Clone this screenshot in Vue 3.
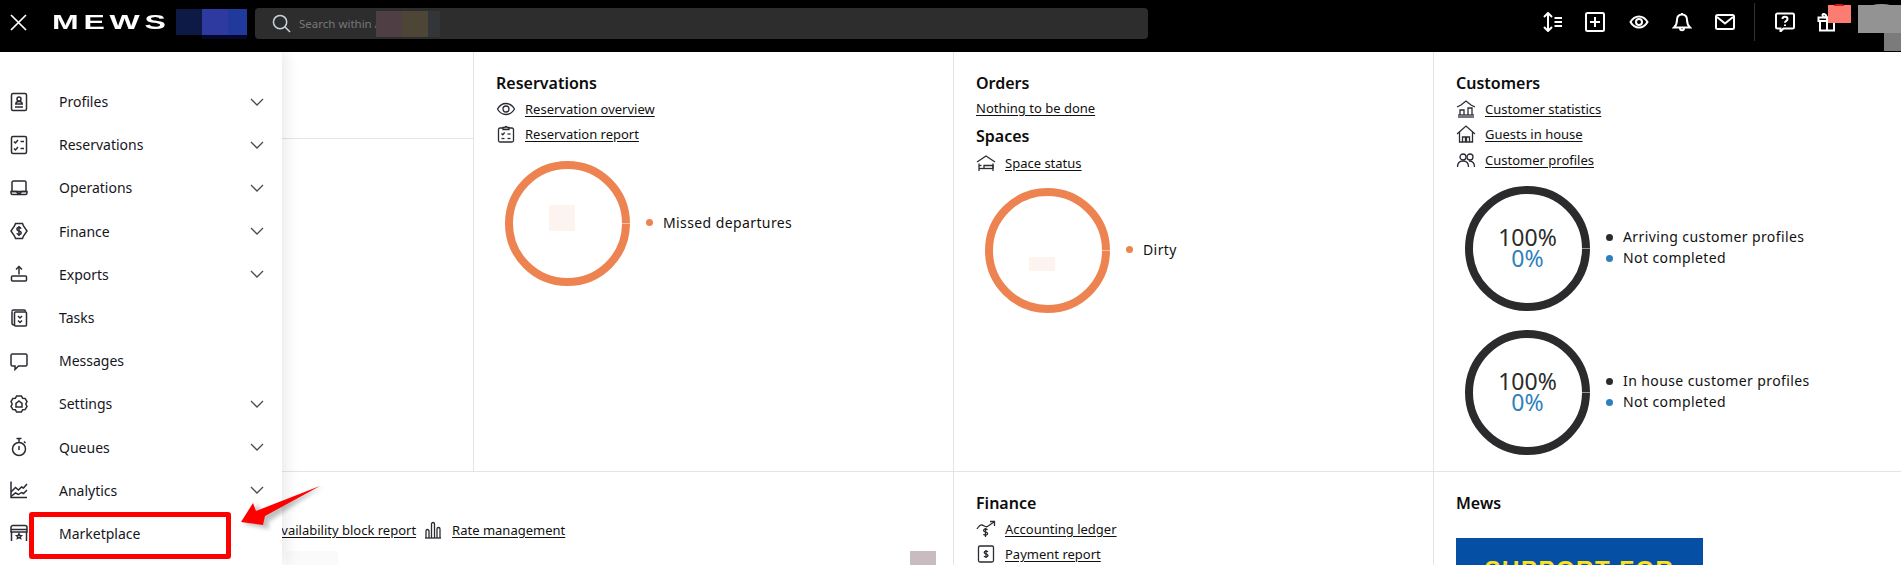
<template>
  <div class="page">
    <header class="topbar">
      <svg class="close" viewBox="0 0 17 17"><path d="M1 1l15 15M16 1L1 16" /></svg>
      <span class="logo"><span class="logo-text">MEWS</span></span>
      <div class="blur-logo"><i></i><i></i><i></i></div>
      <div class="search">
        <svg class="search-icon" viewBox="0 0 20 20"><circle cx="8.5" cy="8.5" r="7" /><path d="M13.5 13.5l5.5 5.5" /></svg>
        <span>Search within A</span>
        <div class="blur-search"><i></i><i></i><i></i></div>
      </div>
      <div class="actions">
        <svg v-for="n in ['sort', 'plus', 'eye', 'bell', 'mail']" :key="n" class="top-icon" viewBox="0 0 20 20">
          <path v-for="d in icons[n]" :key="d" :d="d" />
        </svg>
        <span class="divider"></span>
        <svg class="top-icon" viewBox="0 0 20 20"><path v-for="d in icons.help" :key="d" :d="d" /></svg>
        <div class="gift">
          <svg class="top-icon" viewBox="0 0 20 20"><path v-for="d in icons.gift" :key="d" :d="d" /></svg>
          <span class="gift-badge"></span>
        </div>
        <div class="avatar"><i></i></div>
      </div>
    </header>

    <main class="board">
      <section class="col-left">
        <div class="left-top"></div>
      </section>

      <section class="cell">
        <h3>Reservations</h3>
        <a v-for="l in reservationLinks" :key="l.text" class="link">
          <svg viewBox="0 0 20 20"><path v-for="d in icons[l.icon]" :key="d" :d="d" /></svg>{{ l.text }}
        </a>
        <div class="chart chart-first">
          <div class="donut">
            <svg viewBox="0 0 125 125"><circle cx="62.5" cy="62.5" r="58.5" :stroke="orange" stroke-dasharray="366.4 1.2" stroke-dashoffset="-0.6" /></svg>
            <span class="patch patch-res"></span>
          </div>
          <ul class="legend">
            <li><i :style="{ background: orange }"></i>Missed departures</li>
          </ul>
        </div>
      </section>

      <section class="cell">
        <h3>Orders</h3>
        <a class="link plain">Nothing to be done</a>
        <h3 class="second">Spaces</h3>
        <a class="link">
          <svg viewBox="0 0 20 20"><path v-for="d in icons.bedroom" :key="d" :d="d" /></svg>Space status
        </a>
        <div class="chart">
          <div class="donut">
            <svg viewBox="0 0 125 125"><circle cx="62.5" cy="62.5" r="58.5" :stroke="orange" stroke-dasharray="366.4 1.2" stroke-dashoffset="-0.6" /></svg>
            <span class="patch patch-space"></span>
          </div>
          <ul class="legend">
            <li><i :style="{ background: orange }"></i>Dirty</li>
          </ul>
        </div>
      </section>

      <section class="cell">
        <h3>Customers</h3>
        <a v-for="l in customerLinks" :key="l.text" class="link">
          <svg viewBox="0 0 20 20"><path v-for="d in icons[l.icon]" :key="d" :d="d" /></svg>{{ l.text }}
        </a>
        <div v-for="c in customerCharts" :key="c" class="chart customer">
          <div class="donut">
            <svg viewBox="0 0 125 125"><circle cx="62.5" cy="62.5" r="58.5" stroke="#2b2b2d" stroke-dasharray="366.4 1.2" stroke-dashoffset="-0.6" /></svg>
            <div class="percent"><b>100%</b><b class="blue">0%</b></div>
          </div>
          <ul class="legend">
            <li><i class="dark"></i>{{ c }}</li>
            <li><i class="bluedot"></i>Not completed</li>
          </ul>
        </div>
      </section>

      <section class="cell bottom-left">
        <div class="rate-links">
          <a class="link plain">Availability block report</a>
          <a class="link">
            <svg viewBox="0 0 20 20"><path v-for="d in icons.bars" :key="d" :d="d" /></svg>Rate management
          </a>
        </div>
        <span class="patch patch-faint"></span>
        <span class="patch patch-grey"></span>
      </section>

      <section class="cell bottom">
        <h3>Finance</h3>
        <a v-for="l in financeLinks" :key="l.text" class="link">
          <svg viewBox="0 0 20 20"><path v-for="d in icons[l.icon]" :key="d" :d="d" /></svg>{{ l.text }}
        </a>
      </section>

      <section class="cell bottom">
        <h3>Mews</h3>
        <div class="banner">SUPPORT FOR</div>
      </section>
    </main>

    <nav class="sidebar">
      <a v-for="item in nav" :key="item.label" class="nav-row">
        <svg class="nav-icon" viewBox="0 0 20 20"><path v-for="d in icons[item.icon]" :key="d" :d="d" /></svg>
        <span class="nav-label">{{ item.label }}</span>
        <svg v-if="item.sub" class="chevron" viewBox="0 0 14 8"><path d="M1 1l6 6 6-6" /></svg>
      </a>
    </nav>

    <!-- annotation drawn on top of the screenshot -->
    <div class="callout"></div>
    <svg class="arrow" viewBox="0 0 100 60">
      <path class="arrow-shadow" d="M4 38L18 18l3 9L83 0 28 36l1 7z" />
      <path class="arrow-fill" d="M1 36L13 17l3 8L80 0 25 30l-2 9z" />
    </svg>
  </div>
</template>

<script setup>
const orange = '#ed8351'

const nav = [
  { label: 'Profiles', icon: 'profile', sub: true },
  { label: 'Reservations', icon: 'checklist', sub: true },
  { label: 'Operations', icon: 'laptop', sub: true },
  { label: 'Finance', icon: 'money', sub: true },
  { label: 'Exports', icon: 'upload', sub: true },
  { label: 'Tasks', icon: 'tasks' },
  { label: 'Messages', icon: 'message' },
  { label: 'Settings', icon: 'gear', sub: true },
  { label: 'Queues', icon: 'timer', sub: true },
  { label: 'Analytics', icon: 'chart', sub: true },
  { label: 'Marketplace', icon: 'store' },
]

const reservationLinks = [
  { text: 'Reservation overview', icon: 'eye' },
  { text: 'Reservation report', icon: 'clipboard' },
]
const customerLinks = [
  { text: 'Customer statistics', icon: 'stats' },
  { text: 'Guests in house', icon: 'house' },
  { text: 'Customer profiles', icon: 'people' },
]
const financeLinks = [
  { text: 'Accounting ledger', icon: 'ledger' },
  { text: 'Payment report', icon: 'payment' },
]
const customerCharts = ['Arriving customer profiles', 'In house customer profiles']

const icons = {
  profile: ['M4 1.5h12A1.5 1.5 0 0 1 17.5 3v14a1.5 1.5 0 0 1-1.5 1.5H4A1.5 1.5 0 0 1 2.5 17V3A1.5 1.5 0 0 1 4 1.5z', 'M10 5a2 2 0 1 1 0 4 2 2 0 0 1 0-4z', 'M6.8 12a3.2 2.6 0 0 1 6.4 0z', 'M6 15h8'],
  checklist: ['M4 1.500h12A1.5 1.5 0 0 1 17.5 3v14a1.5 1.5 0 0 1-1.5 1.5H4A1.5 1.5 0 0 1 2.5 17V3A1.5 1.5 0 0 1 4 1.500z', 'M5 6.500l1.5 1.5 2.500-3', 'M11.500 6.500h3.500', 'M5 13.500l1.5 1.5 2.500-3', 'M11.500 13.500h3.500'],
  laptop: ['M4.5 3h11A1.5 1.5 0 0 1 17 4.5v9H3v-9A1.5 1.5 0 0 1 4.5 3z', 'M2 13.500h5.5l1 1.500h3l1-1.500H18V15a1.5 1.5 0 0 1-1.5 1.5h-13A1.5 1.5 0 0 1 2 15z'],
  money: ['M6.500 2.500h7l1 2.500L18 10l-3.500 5-1 2.500h-7l-1-2.500L2 10l3.500-5z', 'M12.200 7.600c-.5-.7-1.200-1-2.200-1-1.200 0-2.100.6-2.100 1.700 0 2.400 4.300 1.100 4.300 3.500 0 1.100-.9 1.700-2.200 1.700-1 0-1.800-.4-2.300-1.100', 'M10 5v10'],
  upload: ['M10 10.500V2.500', 'M7 5.500l3-3 3 3', 'M3.500 12h13a1 1 0 0 1 1 1v3a1 1 0 0 1-1 1h-13a1 1 0 0 1-1-1v-3a1 1 0 0 1 1-1z'],
  tasks: ['M6.500 4h10A1 1 0 0 1 17.500 5v12a1 1 0 0 1-1 1h-10a1 1 0 0 1-1-1V5a1 1 0 0 1 1-1z', 'M3 3.500V15a2 2 0 0 0 2 2', 'M3 3.500A1.500 1.500 0 0 1 4.500 2H15a1.500 1.500 0 0 1 1.500 1.500', 'M9 8l2 2 2-2', 'M9 12.500l2 2 2-2'],
  message: ['M3.500 3h13A1.500 1.500 0 0 1 18 4.500v9a1.500 1.500 0 0 1-1.500 1.500H9.500L6 18.500V15H3.500A1.500 1.500 0 0 1 2 13.500v-9A1.500 1.500 0 0 1 3.500 3z'],
  gear: ['M7.600 2h4.800l1.200 2.200 2.500.2 1.900 3.100L16.800 10l1.200 2.500-1.900 3.100-2.500.2L12.400 18H7.600l-1.200-2.200-2.500-.2L2 12.500 3.200 10 2 7.500l1.900-3.100 2.500-.2z', 'M10 7l3 2.300V13H7V9.300z'],
  timer: ['M10 5.500a6.500 6.500 0 1 1 0 13 6.500 6.500 0 0 1 0-13z', 'M7.500 1.500h5', 'M10 1.500v4', 'M10 9v4', 'M15 4.500l1.500 1.500'],
  chart: ['M2 1.500v16h16', 'M2 12l4.500-4.500 3 2.500 3-3 2 1L18 4', 'M2 16.500l4.500-3.500 3 1.500 3-2 2 1L18 10'],
  store: ['M4 2.500h12a2 2 0 0 1 2 2V9H2V4.500a2 2 0 0 1 2-2z', 'M2 6.500h16', 'M2.500 9v9', 'M17.500 9v9', 'M10 10.800l.8 1.600 1.700.2-1.200 1.200.3 1.700-1.600-.8-1.600.8.3-1.700-1.200-1.200 1.700-.2z'],
  eye: ['M1.500 10C3.500 6.500 6.500 4.500 10 4.500s6.500 2 8.500 5.500c-2 3.500-5 5.500-8.500 5.500S3.500 13.500 1.500 10z', 'M10 7a3 3 0 1 1 0 6 3 3 0 0 1 0-6z'],
  clipboard: ['M7 4H4a1.500 1.500 0 0 0-1.500 1.500v11A1.500 1.500 0 0 0 4 18h12a1.500 1.500 0 0 0 1.500-1.500v-11A1.500 1.500 0 0 0 16 4h-3', 'M7 5.500V3.500h2a1 1 0 0 1 2 0h2v2z', 'M5.500 9.500l1.200 1.200 2-2.200', 'M11.500 10h3', 'M5.500 14.500h3', 'M11.500 14.500h3'],
  bedroom: ['M1 9l9-6 9 6', 'M3 18v-7.500', 'M17 18v-7.500', 'M3 15.500h14', 'M3 12.500h2.500', 'M8 15.500v-3h9v3'],
  stats: ['M1 8l4-2 5-4 5 4 4 2', 'M2 18h16', 'M4 16V11h4v5', 'M12 16V9h4v7', 'M2 16h16'],
  house: ['M1 10l9-8 9 8', 'M3.500 8v10h13V8', 'M6.500 18v-5h3v5', 'M10.500 18v-5h3v5'],
  people: ['M7 4a3 3 0 1 1 0 6 3 3 0 0 1 0-6z', 'M14 4a3 3 0 1 1 0 6 3 3 0 0 1 0-6z', 'M1.500 17c0-4 2.500-6 5.500-6s5.500 2 5.500 6', 'M13 11c3 0 5.500 2 5.500 6'],
  ledger: ['M1 10c2-3 3-4.500 5-4 2.500.6 3 2.500 5.500 1.500L18 3', 'M14 2.500h4.500V7', 'M11.500 11c-.4-.6-1-1-2-1-1.200 0-1.900.6-1.900 1.400 0 2 4 1 4 3.200 0 1-.9 1.500-2.100 1.500-1 0-1.700-.4-2-1', 'M9.500 9v9'],
  payment: ['M4 2h12a1.500 1.500 0 0 1 1.500 1.500v13A1.500 1.500 0 0 1 16 18H4a1.500 1.500 0 0 1-1.500-1.500v-13A1.500 1.500 0 0 1 4 2z', 'M12 8c-.4-.6-1-.9-2-.9-1.100 0-1.800.5-1.800 1.300 0 1.900 3.800 1 3.800 3.100 0 .9-.8 1.400-2 1.400-1 0-1.700-.4-2-.9', 'M10 6v8'],
  bars: ['M2 18h16', 'M3 18v-7a1.500 1.500 0 0 1 3 0v7', 'M8.500 18V4a1.500 1.500 0 0 1 3 0v14', 'M14 18V9a1.500 1.500 0 0 1 3 0v9'],
  sort: ['M6 1v18', 'M2 5l4-4 4 4', 'M2 15l4 4 4-4', 'M12.500 6H20', 'M12.500 10H20', 'M12.500 14H20'],
  plus: ['M2.500 1h15A1.500 1.500 0 0 1 19 2.500v15a1.500 1.500 0 0 1-1.500 1.500h-15A1.500 1.500 0 0 1 1 17.500v-15A1.500 1.500 0 0 1 2.500 1z', 'M10 5v10', 'M5 10h10'],
  bell: ['M10 2.500c-3.500 0-5 2.500-5 5.500 0 4-1 5.500-3 7.500h16c-2-2-3-3.500-3-7.500 0-3-1.500-5.500-5-5.500z', 'M8 16c0 3 4 3 4 0', 'M10 1v1.500'],
  mail: ['M2.500 3h15A1.500 1.500 0 0 1 19 4.500v11a1.500 1.500 0 0 1-1.500 1.500h-15A1.500 1.500 0 0 1 1 15.500v-11A1.500 1.500 0 0 1 2.500 3z', 'M2 5l8 6.500L18 5'],
  help: ['M2.500 1.500h15A1.500 1.500 0 0 1 19 3v12a1.500 1.500 0 0 1-1.500 1.500h-9l-3 3v-3h-3A1.500 1.500 0 0 1 1 15V3a1.500 1.500 0 0 1 1.500-1.500z', 'M7.500 7c0-3 5-3 5 0 0 2-2.500 1.700-2.500 3.800', 'M10 12.500v1.500'],
  gift: ['M3 9h14v9.500H3z', 'M1.500 5.500h17V9h-17z', 'M10 5.500v13', 'M10 5.500C7 5.500 5.500 4.500 5.500 3s3-2 4.500 2.500z'],
}
</script>

<style>
html, body { margin: 0; background: #fff; overflow: hidden; }
</style>

<style scoped>
.page {
  position: relative;
  width: 1901px;
  height: 565px;
  overflow: hidden;
  font-family: "Noto Sans", "Open Sans", sans-serif;
  color: #111;
  background: #fff;
}

/* top bar */
.topbar {
  display: flex;
  align-items: flex-start;
  height: 52px;
  padding-left: 10px;
  box-sizing: border-box;
  background: #000;
}
.close {
  width: 17px;
  height: 17px;
  margin: 14px 25px 0 0;
  fill: none;
  stroke: #fff;
  stroke-width: 1.7;
}
.logo {
  display: block;
  width: 114px;
  height: 52px;
  margin-right: 10px;
}
.logo-text {
  display: inline-block;
  font: 700 20px/44px "Liberation Sans", sans-serif;
  letter-spacing: 3px;
  color: #fff;
  transform: scaleX(1.6);
  transform-origin: left center;
}
.blur-logo {
  display: flex;
  margin: 9px 8px 0 0;
}
.blur-logo i { display: block; width: 26px; height: 26px; background: #0c1a45; }
.blur-logo i:nth-child(2) { background: #2e3a9f; box-shadow: 0 4px 0 #06062a; }
.blur-logo i:nth-child(3) { width: 19px; background: #1f3a9c; box-shadow: 0 4px 0 #06062a; }
.search {
  position: relative;
  display: flex;
  align-items: center;
  gap: 8px;
  width: 893px;
  height: 31px;
  margin-top: 8px;
  padding-left: 17px;
  box-sizing: border-box;
  border-radius: 4px;
  background: #2d2d2d;
  font-size: 11.5px;
  color: #787878;
}
.search-icon {
  width: 19px;
  height: 19px;
  fill: none;
  stroke: #c9d3dc;
  stroke-width: 1.6;
}
.blur-search {
  position: absolute;
  left: 121px;
  top: 3px;
  display: flex;
}
.blur-search i { display: block; width: 26px; height: 26px; background: #4f3f44; }
.blur-search i:nth-child(2) { background: #4d4536; }
.blur-search i:nth-child(3) { width: 12px; background: #333638; }
.actions {
  display: flex;
  align-items: flex-start;
  gap: 23.25px;
  margin-left: auto;
}
.top-icon {
  display: block;
  width: 20px;
  height: 20px;
  margin-top: 12px;
  fill: none;
  stroke: #fff;
  stroke-width: 2;
}
.divider {
  width: 1px;
  height: 38px;
  margin: 3px -4px 0;
  background: #333;
}
.gift {
  position: relative;
  margin-left: -1px;
}
.gift-badge {
  position: absolute;
  left: 11px;
  top: 5px;
  width: 23px;
  height: 18px;
  background: #fd7c72;
}
.gift-badge::before {
  content: "";
  position: absolute;
  left: 6px;
  top: -1px;
  width: 10px;
  height: 2px;
  border-radius: 2px 2px 0 0;
  background: #d01818;
}
.avatar {
  position: relative;
  width: 43px;
  height: 28px;
  margin: 5px 0 0 -2px;
  background: #939393;
}
.avatar::before {
  content: "";
  position: absolute;
  left: 10px;
  top: -1px;
  width: 27px;
  height: 8px;
  border-radius: 50%;
  background: #939393;
}
.avatar i {
  position: absolute;
  right: 0;
  top: 28px;
  width: 17px;
  height: 18px;
  background: #7b7b7b;
}

/* dashboard grid */
.board {
  display: grid;
  grid-template-columns: 473px 480px 480px 468px;
  grid-template-rows: 420px 93px;
}
.cell {
  position: relative;
  padding: 20px 16px 0 22px;
  border-left: 1px solid #e4e4e4;
  box-sizing: border-box;
  border-bottom: 1px solid #e4e4e4;
  overflow: hidden;
}
.col-left { border-bottom: 1px solid #e4e4e4; }
.left-top {
  height: 86px;
  border-bottom: 1px solid #e4e4e4;
}
.cell h3 {
  margin: 0 0 2px;
  font-size: 16px;
  font-weight: 600;
  line-height: 22px;
  color: #0c0c0c;
}
.cell h3.second { margin: 5px 0 3px; }
.link {
  display: flex;
  align-items: center;
  gap: 9px;
  height: 25.5px;
  width: max-content;
  font-size: 13px;
  text-decoration: underline;
  text-underline-offset: 2px;
  color: #111;
}
.link.plain { height: 24px; }
.link svg {
  flex: none;
  width: 20px;
  height: 20px;
  fill: none;
  stroke: #2b2b33;
  stroke-width: 1.3;
}
.chart {
  display: flex;
  align-items: center;
  gap: 16px;
  margin: 12px 0 0 9px;
}
.chart-first { margin-top: 13.5px; }
.chart.customer { margin-top: 13px; }
.chart.customer + .chart.customer { margin-top: 19px; }
.donut {
  position: relative;
  flex: none;
  width: 125px;
  height: 125px;
}
.donut svg {
  display: block;
  width: 125px;
  height: 125px;
  fill: none;
}
.donut circle { stroke-width: 8; }
.percent {
  position: absolute;
  inset: 0 0 1px;
  display: flex;
  flex-direction: column;
  align-items: center;
  justify-content: center;
  font-size: 23px;
  line-height: 21px;
  color: #2b2b2d;
}
.percent b { font-weight: 400; }
.percent .blue { color: #2e7fbd; }
.legend {
  margin: -2px 0 0;
  padding: 0;
  list-style: none;
  font-size: 14px;
  line-height: 21px;
  letter-spacing: .4px;
}
.legend li {
  display: flex;
  align-items: center;
  gap: 10px;
}
.legend i {
  display: block;
  width: 7px;
  height: 7px;
  margin-top: 1px;
  border-radius: 50%;
}
.legend i.dark { background: #2b2b2d; }
.legend i.bluedot { background: #2e7fbd; }
.patch {
  position: absolute;
  display: block;
}
.patch-res { left: 44px; top: 44px; width: 26px; height: 26px; background: #fdf4ef; }
.patch-space { left: 44px; top: 69px; width: 26px; height: 14px; background: #fdf4ef; }
.patch-faint { left: 286px; top: 79px; width: 52px; height: 14px; background: #fafafa; }
.patch-grey { left: 910px; top: 79px; width: 26px; height: 14px; background: #c9bcc0; }

.bottom-left {
  grid-column: 1 / span 2;
  padding-top: 45px;
  border-left: 0;
  border-bottom: 0;
}
.rate-links {
  display: flex;
  align-items: center;
  gap: 7px;
  padding-left: 251px;
}
.bottom { border-bottom: 0; }
.banner {
  width: 247px;
  height: 120px;
  margin-top: 24px;
  padding-top: 19px;
  box-sizing: border-box;
  background: #0550a5;
  color: #ffe11a;
  font: 700 24px/26px "Liberation Sans", sans-serif;
  letter-spacing: 1.5px;
  text-align: center;
}

/* overlay nav */
.sidebar {
  position: absolute;
  left: 0;
  top: 52px;
  bottom: 0;
  width: 282px;
  padding-top: 28px;
  box-sizing: border-box;
  background: #fff;
  box-shadow: 4px 0 14px rgba(0, 0, 0, .09);
}
.nav-row {
  display: flex;
  align-items: center;
  height: 43.2px;
  padding: 0 18px 0 9px;
  font-size: 14px;
  color: #16161d;
}
.nav-icon {
  flex: none;
  width: 20px;
  height: 20px;
  margin-right: 30px;
  fill: none;
  stroke: #2b2b33;
  stroke-width: 1.5;
}
.nav-label { flex: 1; }
.chevron {
  width: 14px;
  height: 8px;
  fill: none;
  stroke: #4a4a57;
  stroke-width: 1.3;
}
.callout {
  position: absolute;
  left: 29px;
  top: 512px;
  width: 202px;
  height: 47px;
  box-sizing: border-box;
  border: 5.5px solid #f00;
  border-radius: 3px;
}
.arrow {
  position: absolute;
  left: 240px;
  top: 486px;
  width: 100px;
  height: 60px;
}
.arrow-fill { fill: #f00; }
.arrow-shadow { fill: rgba(0, 0, 0, .25); filter: blur(2px); }
</style>
